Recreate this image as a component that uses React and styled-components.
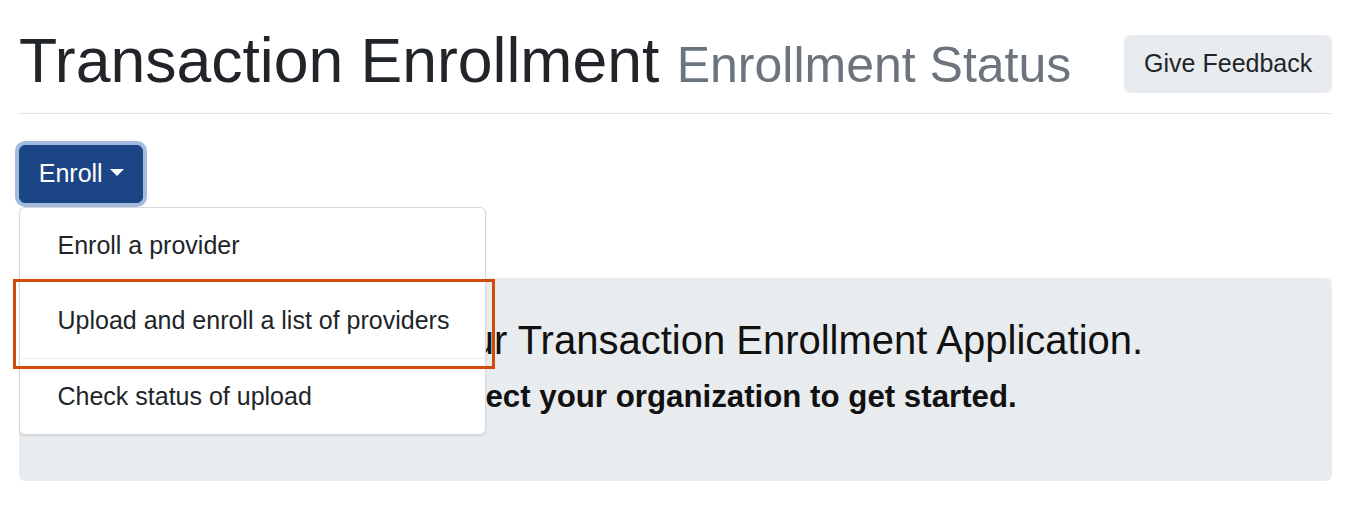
import React from "react";
import styled, { createGlobalStyle } from "styled-components";

const GlobalStyle = createGlobalStyle`
  body {
    margin: 0;
    background: #fff;
    font-family: "Liberation Sans", Arial, sans-serif;
    color: #212529;
  }
`;

const Page = styled.div`
  padding: 0 22px 0 19px;
`;

const Header = styled.div`
  display: flex;
  justify-content: space-between;
  align-items: flex-start;
  padding: 23px 0 15px 0;
  border-bottom: 1px solid #dee2e6;
`;

const Title = styled.h1`
  margin: 0;
  font-size: 62.5px;
  line-height: 75px;
  height: 75px;
  font-weight: 400;
  color: #212529;
  white-space: nowrap;
`;

const Sub = styled.small`
  font-size: 80%;
  line-height: 1;
  color: #6c757d;
`;

const Button = styled.button`
  font-family: inherit;
  font-size: 25px;
  line-height: 37.5px;
  padding: 9.4px 18.75px;
  border-radius: 6px;
  border: 1px solid ${(p) => (p.primary ? "#1b4585" : "#e9ecef")};
  background: ${(p) => (p.primary ? "#1b4585" : "#e9ecef")};
  color: ${(p) => (p.primary ? "#fff" : "#212529")};
  box-shadow: ${(p) => (p.focused ? "0 0 0 4px #a3bbe0" : "none")};
  margin-top: ${(p) => p.offset || 0}px;
  cursor: pointer;
`;

const Caret = styled.span`
  display: inline-block;
  margin-left: 7px;
  vertical-align: 6px;
  border-top: 7.5px solid currentColor;
  border-left: 7.5px solid transparent;
  border-right: 7.5px solid transparent;
`;

const Toolbar = styled.div`
  position: relative;
  margin-top: 31px;
  display: inline-block;
`;

const Menu = styled.div`
  position: absolute;
  top: calc(100% + 4px);
  left: 0;
  width: 467px;
  box-sizing: border-box;
  background: #fff;
  border: 1px solid rgba(0, 0, 0, 0.15);
  border-radius: 6px;
  box-shadow: 0 1px 2px rgba(0, 0, 0, 0.12);
  z-index: 10;
`;

const Item = styled.div`
  font-size: 25px;
  line-height: 37.5px;
  padding: 19px 30px 19px 37.5px;
  color: #212529;
  white-space: nowrap;
  border-bottom: ${(p) => (p.divider ? "1px solid #e9ecef" : "none")};
  height: 37px;
`;

const Highlight = styled.div`
  position: absolute;
  left: -7px;
  top: 71px;
  width: 482px;
  height: 90px;
  box-sizing: border-box;
  border: 3px solid #d04a0a;
  pointer-events: none;
`;

const Jumbotron = styled.div`
  margin-top: 75px;
  background: #e9ecef;
  border-radius: 6px;
  padding: 38px 20px 65px;
  text-align: center;
  color: #111;
`;

const Lead = styled.h4`
  margin: 0;
  font-size: 40px;
  line-height: 48px;
  font-weight: 400;
`;

const Prompt = styled.h5`
  margin: 14px 0 0;
  font-size: 31.25px;
  line-height: 37.5px;
  font-weight: 700;
`;

export default function App() {
  return (
    <Page>
      <GlobalStyle />
      <Header>
        <Title>
          Transaction Enrollment <Sub>Enrollment Status</Sub>
        </Title>
        <Button offset={12}>Give Feedback</Button>
      </Header>
      <Toolbar>
        <Button primary focused>
          Enroll
          <Caret />
        </Button>
        <Menu>
          <Item>Enroll a provider</Item>
          <Item divider>Upload and enroll a list of providers</Item>
          <Item>Check status of upload</Item>
          <Highlight />
        </Menu>
      </Toolbar>
      <Jumbotron>
        <Lead>Welcome to your Transaction Enrollment Application.</Lead>
        <Prompt>Please select your organization to get started.</Prompt>
      </Jumbotron>
    </Page>
  );
}
